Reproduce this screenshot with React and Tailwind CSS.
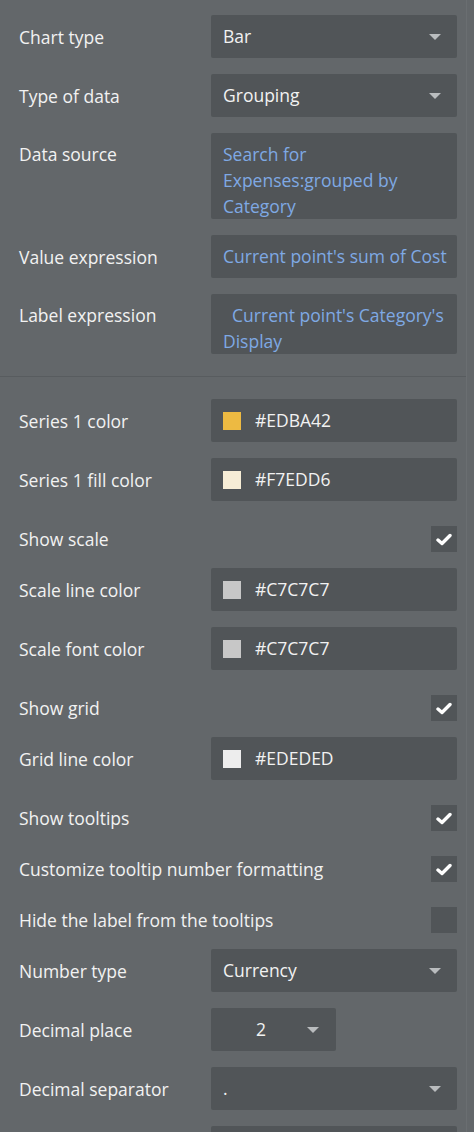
const Caret = () => (
  <svg width="12" height="6" viewBox="0 0 12 6" className="shrink-0">
    <path d="M0 0 H12 L6 6 Z" fill="#b9bcbe" />
  </svg>
)

const Check = () => (
  <svg width="16" height="13" viewBox="0 0 16 13">
    <path d="M2 7 L6 10.5 L14 2.5" stroke="#fff" strokeWidth="3.4" fill="none" strokeLinecap="round" strokeLinejoin="round" />
  </svg>
)

const Label = ({ children, pad = '' }) => (
  <div className={`w-[192px] shrink-0 text-[17.5px] text-[#f2f2f2] leading-[26px] ${pad}`}>{children}</div>
)

const Select = ({ value }) => (
  <div className="flex-1 h-[43px] bg-[#515558] rounded-[2px] flex items-center justify-between pl-3 pr-[16px] text-[17.5px] text-[#f2f2f2]">
    <span>{value}</span>
    <Caret />
  </div>
)

const Expr = ({ children }) => (
  <div className="flex-1 min-h-[43px] bg-[#515558] rounded-[2px] pl-3 pr-1 pt-[8px] text-[17.5px] leading-[26px] text-[#7fa9e4] whitespace-pre-wrap">
    {children}
  </div>
)

const ColorField = ({ color, hex }) => (
  <div className="flex-1 h-[43px] bg-[#515558] rounded-[2px] flex items-center pl-3 gap-[14px] text-[17.5px] text-[#f2f2f2]">
    <span className="w-[18px] h-[18px] block" style={{ backgroundColor: color }} />
    <span>{hex}</span>
  </div>
)

const Row = ({ label, children, multi }) => (
  <div className={`flex ${multi ? 'items-start' : 'items-center'}`}>
    <Label pad={multi ? 'pt-[8px]' : ''}>{label}</Label>
    {children}
  </div>
)

const CheckRow = ({ label, checked }) => (
  <div className="flex items-center justify-between pt-[9px]">
    <div className="text-[17.5px] text-[#f2f2f2] leading-[26px]">{label}</div>
    <div className="w-[26px] h-[26px] bg-[#515558] flex items-center justify-center">
      {checked && <Check />}
    </div>
  </div>
)

export default function App() {
  return (
    <div className="w-[474px] h-[1132px] overflow-hidden bg-[#63676a] font-['Open_Sans',sans-serif]">
      <div className="h-full border-r border-[#6a6e71] mr-[7px]">
        <div className="pl-[19px] pr-[9px] pt-[15px] flex flex-col gap-4">
          <Row label="Chart type"><Select value="Bar" /></Row>
          <Row label="Type of data"><Select value="Grouping" /></Row>
          <Row label="Data source" multi>
            <Expr>{'Search for\nExpenses:grouped by\nCategory'}</Expr>
          </Row>
          <Row label="Value expression"><Expr>Current point's sum of Cost</Expr></Row>
          <Row label="Label expression" multi>
            <Expr>{"  Current point's Category's\nDisplay"}</Expr>
          </Row>
        </div>

        <div className="h-px bg-[#585c5f] mt-[22px] mb-[22px]" />

        <div className="pl-[19px] pr-[9px] flex flex-col gap-4">
          <Row label="Series 1 color"><ColorField color="#EDBA42" hex="#EDBA42" /></Row>
          <Row label="Series 1 fill color"><ColorField color="#F7EDD6" hex="#F7EDD6" /></Row>
          <CheckRow label="Show scale" checked />
          <Row label="Scale line color"><ColorField color="#C7C7C7" hex="#C7C7C7" /></Row>
          <Row label="Scale font color"><ColorField color="#C7C7C7" hex="#C7C7C7" /></Row>
          <CheckRow label="Show grid" checked />
          <Row label="Grid line color"><ColorField color="#EDEDED" hex="#EDEDED" /></Row>
          <CheckRow label="Show tooltips" checked />
          <CheckRow label="Customize tooltip number formatting" checked />
          <CheckRow label="Hide the label from the tooltips" />
          <Row label="Number type"><Select value="Currency" /></Row>
          <Row label="Decimal place">
            <div className="w-[125px] h-[43px] bg-[#515558] rounded-[2px] flex items-center pl-[45px] pr-[17px] justify-between text-[17.5px] text-[#f2f2f2]">
              <span>2</span>
              <Caret />
            </div>
          </Row>
          <Row label="Decimal separator"><Select value="." /></Row>
          <div className="flex">
            <div className="w-[192px] shrink-0" />
            <div className="flex-1 h-[43px] bg-[#515558] rounded-[2px]" />
          </div>
        </div>
      </div>
    </div>
  )
}
